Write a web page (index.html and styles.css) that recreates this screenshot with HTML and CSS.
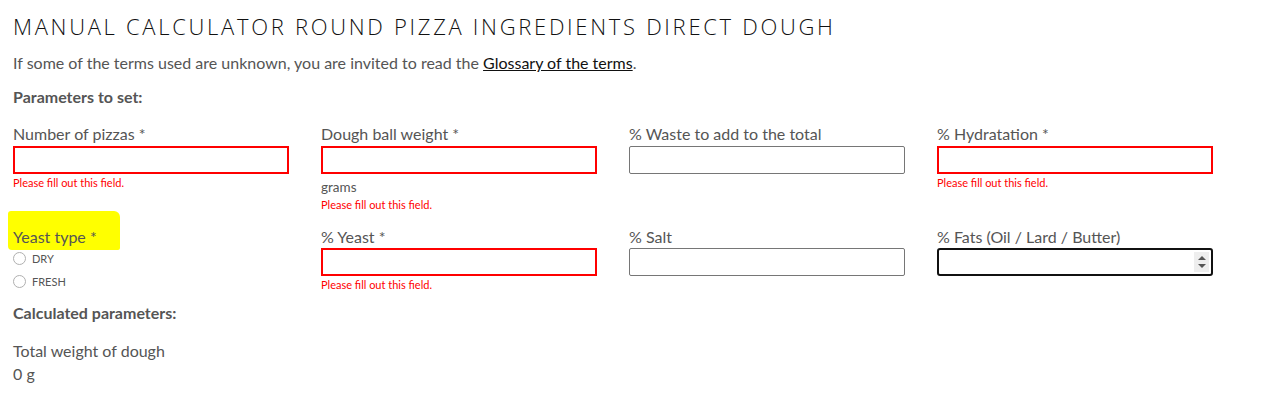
FILE: index.html
```html
<!DOCTYPE html>
<html lang="en">
<head>
<meta charset="utf-8">
<title>Manual calculator</title>
<link rel="stylesheet" href="styles.css">
</head>
<body>
<div class="page">
  <h1 class="title">MANUAL CALCULATOR ROUND PIZZA INGREDIENTS DIRECT DOUGH</h1>
  <p class="intro">If some of the terms used are unknown, you are invited to read the <a href="#" class="link">Glossary of the terms</a>.</p>
  <h2 class="section">Parameters to set:</h2>

  <div class="grid">
    <div class="cell">
      <label class="lbl">Number of pizzas *</label>
      <input class="field invalid" type="text">
      <div class="err">Please fill out this field.</div>
    </div>
    <div class="cell">
      <label class="lbl">Dough ball weight *</label>
      <input class="field invalid" type="text">
      <div class="unit">grams</div>
      <div class="err err-after-unit">Please fill out this field.</div>
    </div>
    <div class="cell">
      <label class="lbl">% Waste to add to the total</label>
      <input class="field" type="text">
    </div>
    <div class="cell">
      <label class="lbl">% Hydratation *</label>
      <input class="field invalid" type="text">
      <div class="err">Please fill out this field.</div>
    </div>

    <div class="cell">
      <label class="lbl highlight">Yeast type *</label>
      <label class="radio"><input type="radio" name="yt" class="rad"><span>DRY</span></label>
      <label class="radio"><input type="radio" name="yt" class="rad"><span>FRESH</span></label>
    </div>
    <div class="cell">
      <label class="lbl">% Yeast *</label>
      <input class="field invalid" type="text">
      <div class="err">Please fill out this field.</div>
    </div>
    <div class="cell">
      <label class="lbl">% Salt</label>
      <input class="field" type="text">
    </div>
    <div class="cell">
      <label class="lbl">% Fats (Oil / Lard / Butter)</label>
      <div class="spinwrap">
        <input class="field focused" type="text">
        <span class="spinner"><span class="up"></span><span class="down"></span></span>
      </div>
    </div>
  </div>

  <h2 class="section calc">Calculated parameters:</h2>
  <div class="result-label">Total weight of dough</div>
  <div class="result-value">0 g</div>
  <h2 class="section list">List of ingredients and weight to calculate</h2>
</div>
</body>
</html>
```

FILE: styles.css
```css
html, body {
  margin: 0;
  padding: 0;
  background: #fff;
}
body {
  font-family: Lato, "Liberation Sans", sans-serif;
  color: #555;
  font-size: 16px;
}
.page {
  padding: 12px 13px 0 13px;
}
.title {
  margin: 0;
  font-family: "Open Sans", "DejaVu Sans", sans-serif;
  font-weight: 300;
  font-size: 22px;
  line-height: 28px;
  letter-spacing: 2.7px;
  color: #111;
}
.intro {
  margin: 13px 0 0 0;
  line-height: 20px;
}
.link {
  color: #111;
  text-decoration: underline;
}
.section {
  margin: 14px 0 0 0;
  font-size: 16px;
  font-weight: 700;
  line-height: 20px;
  color: #555;
}
.grid {
  display: grid;
  grid-template-columns: repeat(4, 308px);
  row-gap: 15px;
  margin-top: 17px;
}
.cell {
  display: flex;
  flex-direction: column;
  align-items: flex-start;
}
.lbl {
  display: block;
  line-height: 20px;
  font-size: 16px;
  color: #555;
}
.field {
  box-sizing: border-box;
  width: 276px;
  height: 28px;
  margin: 1px 0 0 0;
  border: 1px solid #767676;
  border-radius: 2px;
  background: #fff;
  padding: 0 6px;
  font: inherit;
}
.grid > .cell:nth-child(-n+4) .field {
  margin-top: 2px;
}
.field.invalid {
  border: 2px solid #ff0000;
  border-radius: 0;
}
.field.focused {
  border: 2px solid #111;
  border-radius: 3px;
  margin: 0;
}
.err {
  margin-top: 2px;
  font-size: 11px;
  line-height: 14px;
  color: #ff0000;
}
.unit {
  margin-top: 5px;
  font-size: 13.5px;
  line-height: 16px;
  color: #555;
}
.err.err-after-unit {
  margin-top: 3px;
}
.highlight {
  background: #ffff00;
  box-sizing: border-box;
  width: 112px;
  margin: -16px 0 -3px -5px;
  padding: 16px 0 3px 5px;
  border-radius: 3px 6px 2px 4px;
}
.radio {
  display: flex;
  align-items: center;
  font-size: 11px;
  line-height: 16px;
  color: #555;
  height: 23px;
}
.radio:first-of-type {
  height: 16px;
}
.rad {
  appearance: none;
  -webkit-appearance: none;
  box-sizing: border-box;
  width: 13px;
  height: 13px;
  margin: 0 6px 0 0;
  border: 1px solid #b0b0b0;
  border-radius: 50%;
  background: #fff;
}
.spinwrap {
  position: relative;
  margin-top: 1px;
}
.spinner {
  position: absolute;
  right: 4px;
  top: 4px;
  width: 15px;
  height: 20px;
  background: #eee;
  display: flex;
  flex-direction: column;
  align-items: center;
  justify-content: center;
  gap: 4px;
}
.up {
  width: 0;
  height: 0;
  border-left: 4px solid transparent;
  border-right: 4px solid transparent;
  border-bottom: 4px solid #555;
}
.down {
  width: 0;
  height: 0;
  border-left: 4px solid transparent;
  border-right: 4px solid transparent;
  border-top: 4px solid #555;
}
.section.calc {
  margin-top: 10px;
}
.result-label {
  margin-top: 18px;
  line-height: 20px;
}
.result-value {
  margin-top: 3px;
  line-height: 20px;
}
.section.list {
  margin-top: 13px;
}
```
